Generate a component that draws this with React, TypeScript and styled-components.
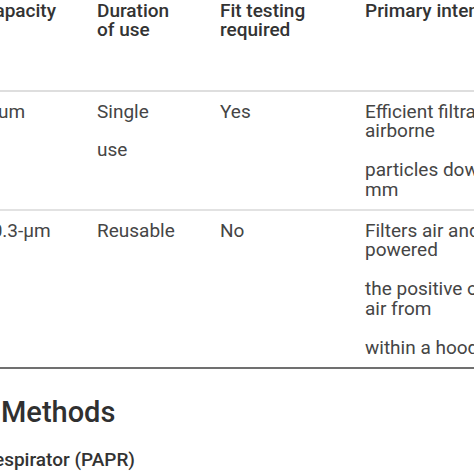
import React from "react";
import styled, { createGlobalStyle } from "styled-components";

const Global = createGlobalStyle`
  html, body { margin: 0; padding: 0; background: #ffffff; }
  body { font-family: Roboto, "Liberation Sans", Arial, sans-serif; color: #444; overflow: hidden; }
`;

const Page = styled.div`
  width: 474px;
  height: 474px;
  overflow: hidden;
`;

const Shift = styled.div`
  margin-left: -18px;
  width: 900px;
`;

const Table = styled.table`
  border-collapse: separate;
  border-spacing: 0;
  table-layout: fixed;
  width: 900px;
`;

const Col = styled.col<{ $w: number }>`
  width: ${(p) => p.$w}px;
`;

const HeadCell = styled.th`
  text-align: left;
  vertical-align: top;
  font-weight: 500;
  font-size: 19px;
  line-height: 19px;
  color: #333;
  height: 89px;
  padding: 1px 0 0 0;
  border-bottom: 2px solid #dedede;
  box-sizing: content-box;
`;

const Cell = styled.td<{ $last?: boolean }>`
  vertical-align: top;
  font-size: 19px;
  line-height: 19.75px;
  color: #454545;
  padding: 9.5px 0 9.5px 0;
  border-bottom: 2px solid ${(p) => (p.$last ? "#707070" : "#e2e2e2")};
`;

const Para = styled.p`
  margin: 0 0 19px 0;
  white-space: nowrap;
  &:last-child { margin-bottom: 0; }
`;

const Heading = styled.h2`
  margin: 26px 0 0 0;
  padding-left: 19px;
  font-size: 29px;
  line-height: 34px;
  font-weight: 500;
  color: #303030;
`;

const SubHeading = styled.h3`
  margin: 20px 0 0 0;
  font-size: 19px;
  line-height: 22px;
  font-weight: 500;
  color: #333;
  white-space: nowrap;
`;

type RowData = {
  capacity: string;
  duration: string[];
  fit: string;
  use: string[][];
};

const rows: RowData[] = [
  {
    capacity: "1-um",
    duration: ["Single", "use"],
    fit: "Yes",
    use: [
      ["Efficient filtration of", "airborne"],
      ["particles down to 0.3", "mm"],
    ],
  },
  {
    capacity: "<0.3-μm",
    duration: ["Reusable"],
    fit: "No",
    use: [
      ["Filters air and delivers", "powered"],
      ["the positive of filtered", "air from"],
      ["within a hood"],
    ],
  },
];

export default function App() {
  return (
    <Page>
      <Global />
      <Shift>
        <Table>
          <colgroup>
            <Col $w={115} />
            <Col $w={123} />
            <Col $w={145} />
            <Col $w={517} />
          </colgroup>
          <thead>
            <tr>
              <HeadCell>Capacity</HeadCell>
              <HeadCell>
                Duration
                <br />
                of use
              </HeadCell>
              <HeadCell>
                Fit testing
                <br />
                required
              </HeadCell>
              <HeadCell>Primary intended use</HeadCell>
            </tr>
          </thead>
          <tbody>
            {rows.map((r, i) => {
              const last = i === rows.length - 1;
              return (
                <tr key={i}>
                  <Cell $last={last}>
                    <Para>{r.capacity}</Para>
                  </Cell>
                  <Cell $last={last}>
                    {r.duration.map((d, j) => (
                      <Para key={j}>{d}</Para>
                    ))}
                  </Cell>
                  <Cell $last={last}>
                    <Para>{r.fit}</Para>
                  </Cell>
                  <Cell $last={last}>
                    {r.use.map((p, j) => (
                      <Para key={j}>
                        {p.map((line, k) => (
                          <React.Fragment key={k}>
                            {k > 0 && <br />}
                            {line}
                          </React.Fragment>
                        ))}
                      </Para>
                    ))}
                  </Cell>
                </tr>
              );
            })}
          </tbody>
        </Table>
        <Heading>Methods</Heading>
        <SubHeading>Respirator (PAPR)</SubHeading>
      </Shift>
    </Page>
  );
}
